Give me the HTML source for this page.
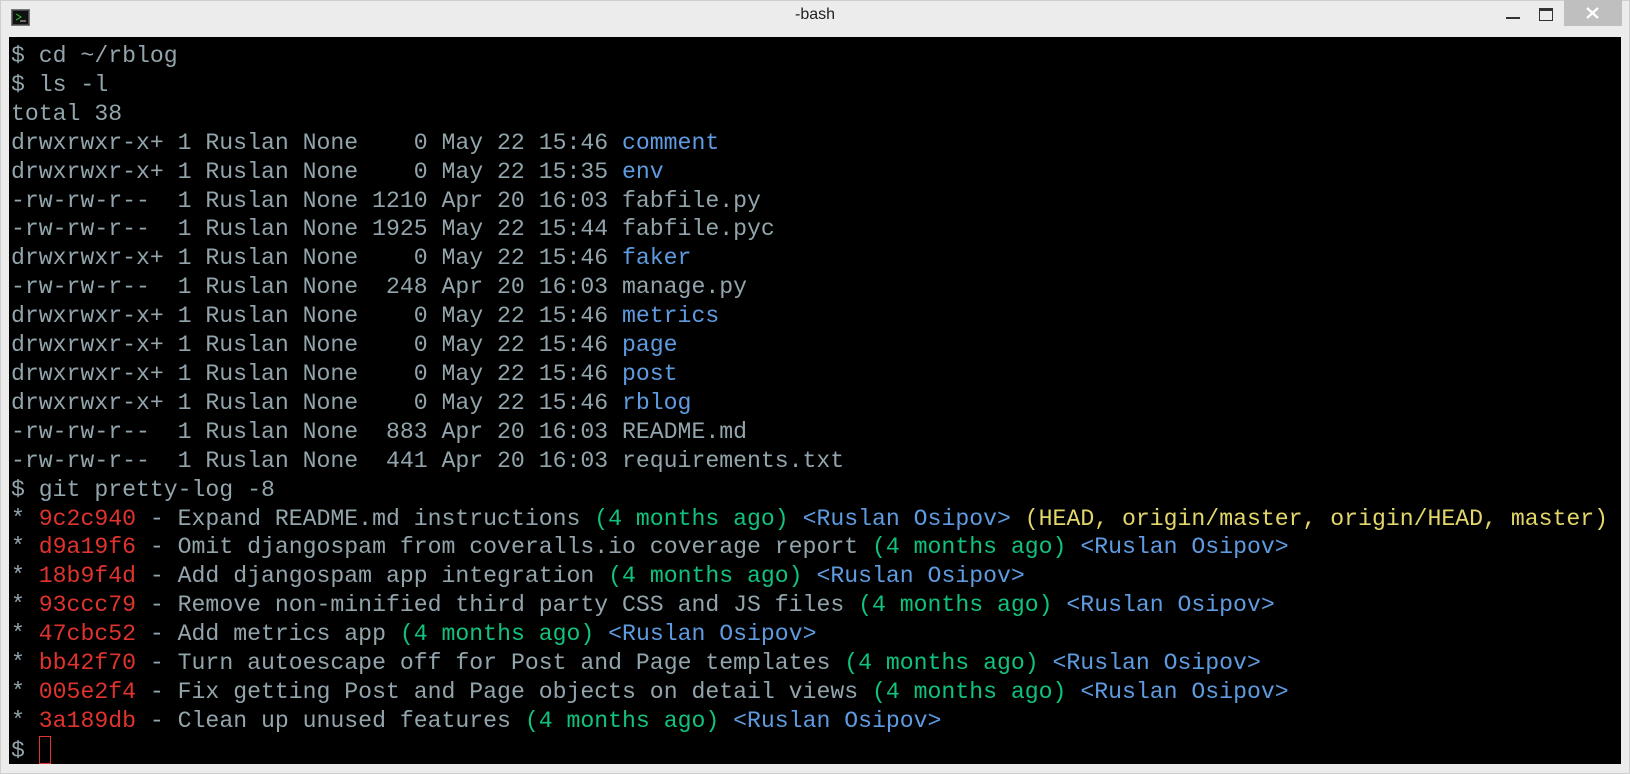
<!DOCTYPE html>
<html><head><meta charset="utf-8"><style>
html,body{margin:0;padding:0;background:#ececec;width:1630px;height:774px;overflow:hidden}
.win{position:absolute;left:0;top:0;width:1628px;height:772px;border:1px solid #cfcfcf;background:#ececec}
.title{position:absolute;left:0;top:6px;width:1630px;text-align:center;font:16px "Liberation Sans",sans-serif;color:#222}
.close{position:absolute;left:1564px;top:0;width:58px;height:26px;background:#bfbfbf}
.term{position:absolute;left:9px;top:37px;width:1612px;height:727px;background:#000}
pre{position:absolute;left:11px;top:42px;margin:0;font:23.15px/28.9px "Liberation Mono",monospace;color:#93a5ac;white-space:pre}
.b{color:#5f9be0}.r{color:#e0332e}.g{color:#11c27c}.y{color:#e3d66a}
.cur{display:inline-block;width:12px;height:28px;border:1px solid #e0332e;vertical-align:-7px;box-sizing:border-box}
</style></head><body>
<div class="win"></div>
<svg style="position:absolute;left:11px;top:9px" width="19" height="17"><rect x="0.5" y="0.5" width="18" height="16" fill="#444" stroke="#777"/><rect x="2" y="2" width="15" height="13" fill="#111"/><path d="M5 5l5 3-5 3" stroke="#3c3" fill="none"/><path d="M9 12h6" stroke="#ccc"/></svg>
<div class="title">-bash</div>
<div style="position:absolute;left:1506px;top:17px;width:14px;height:2px;background:#333"></div>
<div style="position:absolute;left:1539px;top:8px;width:12px;height:9px;border:1.5px solid #333;border-top-width:3px"></div>
<div class="close"></div>
<svg style="position:absolute;left:1586px;top:7px" width="13" height="12"><path d="M1 1l11 10M12 1L1 11" stroke="#fff" stroke-width="2.2"/></svg>
<div class="term"></div>
<pre>$ cd ~/rblog
$ ls -l
total 38
drwxrwxr-x+ 1 Ruslan None    0 May 22 15:46 <span class="b">comment</span>
drwxrwxr-x+ 1 Ruslan None    0 May 22 15:35 <span class="b">env</span>
-rw-rw-r--  1 Ruslan None 1210 Apr 20 16:03 fabfile.py
-rw-rw-r--  1 Ruslan None 1925 May 22 15:44 fabfile.pyc
drwxrwxr-x+ 1 Ruslan None    0 May 22 15:46 <span class="b">faker</span>
-rw-rw-r--  1 Ruslan None  248 Apr 20 16:03 manage.py
drwxrwxr-x+ 1 Ruslan None    0 May 22 15:46 <span class="b">metrics</span>
drwxrwxr-x+ 1 Ruslan None    0 May 22 15:46 <span class="b">page</span>
drwxrwxr-x+ 1 Ruslan None    0 May 22 15:46 <span class="b">post</span>
drwxrwxr-x+ 1 Ruslan None    0 May 22 15:46 <span class="b">rblog</span>
-rw-rw-r--  1 Ruslan None  883 Apr 20 16:03 README.md
-rw-rw-r--  1 Ruslan None  441 Apr 20 16:03 requirements.txt
$ git pretty-log -8
* <span class="r">9c2c940</span> - Expand README.md instructions <span class="g">(4 months ago)</span> <span class="b">&lt;Ruslan Osipov&gt;</span> <span class="y">(HEAD, origin/master, origin/HEAD, master)</span>
* <span class="r">d9a19f6</span> - Omit djangospam from coveralls.io coverage report <span class="g">(4 months ago)</span> <span class="b">&lt;Ruslan Osipov&gt;</span>
* <span class="r">18b9f4d</span> - Add djangospam app integration <span class="g">(4 months ago)</span> <span class="b">&lt;Ruslan Osipov&gt;</span>
* <span class="r">93ccc79</span> - Remove non-minified third party CSS and JS files <span class="g">(4 months ago)</span> <span class="b">&lt;Ruslan Osipov&gt;</span>
* <span class="r">47cbc52</span> - Add metrics app <span class="g">(4 months ago)</span> <span class="b">&lt;Ruslan Osipov&gt;</span>
* <span class="r">bb42f70</span> - Turn autoescape off for Post and Page templates <span class="g">(4 months ago)</span> <span class="b">&lt;Ruslan Osipov&gt;</span>
* <span class="r">005e2f4</span> - Fix getting Post and Page objects on detail views <span class="g">(4 months ago)</span> <span class="b">&lt;Ruslan Osipov&gt;</span>
* <span class="r">3a189db</span> - Clean up unused features <span class="g">(4 months ago)</span> <span class="b">&lt;Ruslan Osipov&gt;</span>
$ <span class="cur"></span></pre>
</body></html>
